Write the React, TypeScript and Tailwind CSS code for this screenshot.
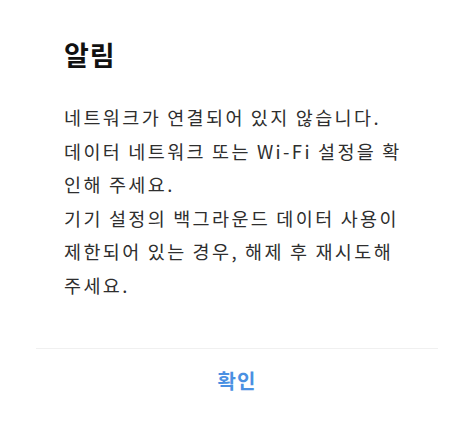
import React from 'react';

const lines = [
  '네트워크가 연결되어 있지 않습니다.',
  '데이터 네트워크 또는 Wi-Fi 설정을 확',
  '인해 주세요.',
  '기기 설정의 백그라운드 데이터 사용이',
  '제한되어 있는 경우, 해제 후 재시도해',
  '주세요.',
];

const NoticeDialog: React.FC<{ onConfirm?: () => void }> = ({ onConfirm }) => {
  return (
    <div className="w-[474px] h-[428px] bg-white px-[36px] flex flex-col font-['Noto_Sans_CJK_KR','Noto_Sans',sans-serif]">
      <div className="px-[28px] pt-[36px]">
        <h1 className="text-[27px] leading-[38px] tracking-[1px] font-bold text-[#111111]">알림</h1>
        <p className="mt-[27px] text-[18.5px] leading-[33.6px] tracking-[2.4px] [word-spacing:-0.5px] text-[#2e2e2e]">
          {lines.map((line) => (
            <span key={line} className="block whitespace-nowrap">
              {line}
            </span>
          ))}
        </p>
      </div>
      <div className="mt-[45px] border-t border-[#f0f0f0]">
        <button
          type="button"
          onClick={onConfirm}
          className="w-full h-[64px] flex items-center justify-center text-[20px] tracking-[1px] font-semibold text-[#4a90e2]"
        >
          확인
        </button>
      </div>
    </div>
  );
};

export default function App() {
  return <NoticeDialog />;
}
